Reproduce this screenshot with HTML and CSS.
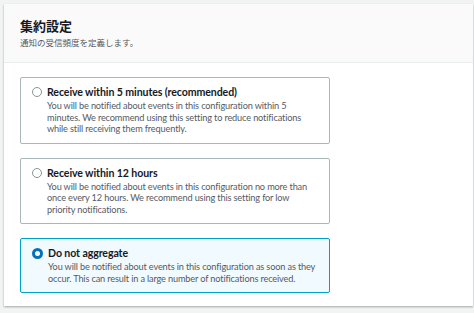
FILE: index.html
```html
<!DOCTYPE html>
<html lang="ja">
<head>
    <meta charset="UTF-8">
    <title>集約設定</title>
    <link rel="stylesheet" href="styles.css">
</head>
<body>
    <div class="panel">
        <div class="panel-header">
            <h2>集約設定</h2>
            <p>通知の受信頻度を定義します。</p>
        </div>
        <div class="panel-body">
            <label class="option">
                <span class="radio"></span>
                <span class="option-text">
                    <span class="option-title">Receive within 5 minutes (recommended)</span>
                    <span class="option-desc">You will be notified about events in this configuration within 5 minutes. We recommend using this setting to reduce notifications while still receiving them frequently.</span>
                </span>
            </label>
            <label class="option">
                <span class="radio"></span>
                <span class="option-text">
                    <span class="option-title">Receive within 12 hours</span>
                    <span class="option-desc">You will be notified about events in this configuration no more than once every 12 hours. We recommend using this setting for low priority notifications.</span>
                </span>
            </label>
            <label class="option selected">
                <span class="radio"></span>
                <span class="option-text">
                    <span class="option-title">Do not aggregate</span>
                    <span class="option-desc">You will be notified about events in this configuration as soon as they occur. This can result in a large number of notifications received.</span>
                </span>
            </label>
        </div>
    </div>
</body>
</html>
```

FILE: styles.css
```css
html {
    font-size: 16px;
}

body {
    margin: 0;
    padding: 4px 1px 7px 4px;
    background-color: #f2f3f3;
    color: #16191f;
    font-family: Lato, "Noto Sans CJK JP", sans-serif;
}

.panel {
    background: #ffffff;
    box-shadow: 0 1px 2px rgba(0, 28, 36, 0.35);
}

.panel-header {
    background: #fafafa;
    border-bottom: 1px solid #eaeded;
    padding: 13px 16px 9px;
    height: 36px;
}

.panel-header h2 {
    margin: 0;
    font-size: 13px;
    line-height: 17px;
    font-weight: 700;
    font-family: "Noto Sans CJK JP", sans-serif;
}

.panel-header p {
    margin: 2px 0 0;
    font-size: 8.5px;
    line-height: 13px;
    color: #545b64;
    font-family: "Noto Sans CJK JP", sans-serif;
}

.panel-body {
    display: flex;
    flex-direction: column;
    gap: 14px;
    padding: 14px 0 13px 16px;
}

.option {
    width: 286px;
    display: flex;
    gap: 5px;
    padding: 8px 11px 8px 11px;
    border: 1px solid #aab7b8;
    border-radius: 2px;
}

.option.selected {
    background: #f1faff;
    border-color: #00a1c9;
}

.radio {
    flex: none;
    width: 8px;
    height: 8px;
    margin-top: 1px;
    border: 1.5px solid #879596;
    border-radius: 50%;
    background: #ffffff;
}

.selected .radio {
    border: 3px solid #0073bb;
    width: 5px;
    height: 5px;
}

.option-text {
    display: flex;
    flex-direction: column;
    gap: 1px;
}

.option-title {
    font-size: 10.6px;
    line-height: 13px;
    font-weight: 700;
    letter-spacing: -0.1px;
}

.option-desc {
    font-size: 9.2px;
    line-height: 11.5px;
    letter-spacing: -0.15px;
    color: #545b64;
}
```
